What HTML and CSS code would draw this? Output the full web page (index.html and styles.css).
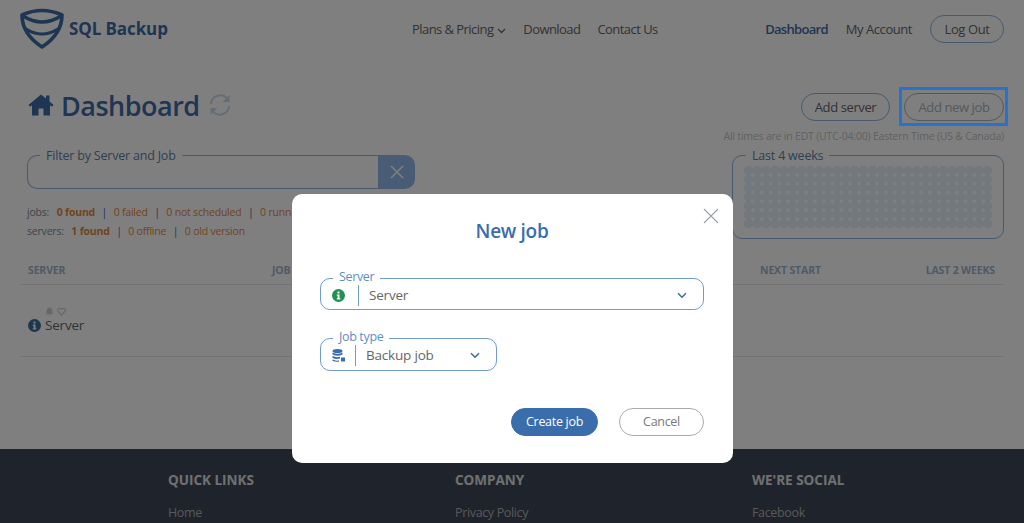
FILE: index.html
```html
<!doctype html>
<html>
<head>
<meta charset="utf-8">
<title>SQL Backup</title>
<link rel="stylesheet" href="styles.css">
</head>

<body>
<div class="page">
	<div class="top">
		<a href="#" class="logo">
			<svg width="44" height="42" viewBox="0 0 44 42"><g fill="none" stroke="#3d6ba6" stroke-linejoin="round" stroke-linecap="round"><path stroke-width="3.6" d="M2 7Q22 -2 42 7Q42 26 22 39Q2 26 2 7Z"/><path stroke-width="3.4" d="M3 8Q22 20 41 8"/><path stroke-width="3.2" d="M6 21Q22 31 38 21"/></g></svg>
			<span>SQL Backup</span>
		</a>
		<div class="nav">
			<a href="#">Plans &amp; Pricing <svg width="9" height="6" viewBox="0 0 9 6"><path d="M1 1l3.500 3.500L8 1" fill="none" stroke="#666" stroke-width="1.300"/></svg></a>
			<a href="#">Download</a>
			<a href="#">Contact Us</a>
		</div>
		<div class="user">
			<a href="#" class="cur">Dashboard</a>
			<a href="#">My Account</a>
			<a href="#" class="btn logout">Log Out</a>
		</div>
	</div>

	<div class="main">
		<div class="title">
			<h1>
				<svg width="26" height="22" viewBox="0 0 26 22"><path d="M13 0.500L0.500 11l1.500 1.800L4 11.200V21.500h6.500v-7h5v7H22V11.200l2 1.600L25.500 11 21.500 7.600V1.500h-3.500v3.100z" fill="#3d6ba6"/></svg>
				Dashboard
				<svg class="sync" width="24" height="24" viewBox="0 0 24 24"><g fill="none" stroke="#c8dbe8" stroke-width="2"><path d="M3 11A9.200 9.200 0 0 1 19.500 6"/><path d="M21 13A9.200 9.200 0 0 1 4.500 18"/></g><path d="M21.500 2v7h-7zM2.500 22v-7h7z" fill="#c8dbe8"/></svg>
			</h1>
			<div class="actions">
				<a href="#" class="btn">Add server</a>
				<a href="#" class="btn faded">Add new job</a>
			</div>
		</div>
		<p class="tz">All times are in EDT (UTC-04:00) Eastern Time (US &amp; Canada)</p>

		<div class="middle">
			<div class="left">
				<div class="filter">
					<fieldset>
						<legend>Filter by Server and Job</legend>
					</fieldset>
					<a href="#" class="clear"><svg width="14" height="14" viewBox="0 0 14 14"><path d="M1 1l12 12M13 1L1 13" stroke="#fff" stroke-width="1.500"/></svg></a>
				</div>
				<p class="stats">jobs: <b>0 found</b><i>|</i><span>0 failed</span><i>|</i><span>0 not scheduled</span><i>|</i><span>0 running</span></p>
				<p class="stats">servers: <b>1 found</b><i>|</i><span>0 offline</span><i>|</i><span>0 old version</span></p>
			</div>
			<fieldset class="weeks">
				<legend>Last 4 weeks</legend>
				<div class="dots"></div>
			</fieldset>
		</div>

		<div class="thead">
			<span class="c1">SERVER</span>
			<span class="c2">JOB</span>
			<span class="c3">NEXT START</span>
			<span class="c4">LAST 2 WEEKS</span>
		</div>
		<div class="row">
			<div class="small">
				<svg width="9" height="9" viewBox="0 0 9 9"><path d="M4.500 0.500Q7.300 0.800 7.300 4V6L8.500 7.300H0.500L1.700 6V4Q1.700 0.800 4.500 0.500ZM3.500 8h2L4.500 9z" fill="#cfcfcf"/></svg>
				<svg width="9" height="9" viewBox="0 0 9 9"><path d="M4.500 8L1 4.200Q0 2 2.200 1.300Q3.600 1 4.500 2.300Q5.400 1 6.800 1.300Q9 2 8 4.200Z" fill="none" stroke="#cfcfcf" stroke-width="1.200"/></svg>
			</div>
			<div class="name">
				<svg width="13" height="13" viewBox="0 0 13 13"><circle cx="6.500" cy="6.500" r="6.500" fill="#3a6f9a"/><path d="M5.500 2.500h2v2h-2zM4.800 5.500h2.700v3.800h.8v1.200H4.800V9.300h.8V6.700h-.8z" fill="#fff"/></svg>
				Server
			</div>
		</div>
	</div>

	<div class="foot">
		<div class="fcol c-a"><h4>QUICK LINKS</h4><a href="#">Home</a></div>
		<div class="fcol c-b"><h4>COMPANY</h4><a href="#">Privacy Policy</a></div>
		<div class="fcol c-c"><h4>WE'RE SOCIAL</h4><a href="#">Facebook</a></div>
	</div>
</div>

<div class="mask">
	<div class="ring"></div>
	<div class="dialog">
		<a href="#" class="close"><svg width="16" height="16" viewBox="0 0 16 16"><path d="M1 1l14 14M15 1L1 15" stroke="#9aa1a8" stroke-width="1.100"/></svg></a>
		<h2>New job</h2>
		<fieldset class="sel sel-server">
			<legend>Server</legend>
			<svg class="ico" width="13" height="13" viewBox="0 0 13 13"><circle cx="6.500" cy="6.500" r="6.500" fill="#1f9150"/><path d="M5.500 2.500h2v2h-2zM4.800 5.500h2.700v3.800h.8v1.200H4.800V9.300h.8V6.700h-.8z" fill="#fff"/></svg>
			<span class="val">Server</span>
			<svg class="arrow" width="10" height="7" viewBox="0 0 10 7"><path d="M1 1.200l4 4 4-4" fill="none" stroke="#3a6dab" stroke-width="1.500"/></svg>
		</fieldset>
		<fieldset class="sel sel-type">
			<legend>Job type</legend>
			<svg class="ico" width="13" height="13" viewBox="0 0 13 13"><ellipse cx="5.500" cy="2" rx="5" ry="2" fill="#3a6dab"/><path d="M0.500 3.500Q5.500 6 10.500 3.500V5.500Q5.500 8 0.500 5.500ZM0.500 7Q4 8.800 8 7.800V9.500Q4 10.500 0.500 9ZM0.500 10.500Q3 12 7 11.500V12.800Q3 13 0.500 12ZM9 8.500h4v4h-4z" fill="#3a6dab"/></svg>
			<span class="val">Backup job</span>
			<svg class="arrow" width="10" height="7" viewBox="0 0 10 7"><path d="M1 1.200l4 4 4-4" fill="none" stroke="#3a6dab" stroke-width="1.500"/></svg>
		</fieldset>
		<div class="btns">
			<a href="#" class="create">Create job</a>
			<a href="#" class="cancel">Cancel</a>
		</div>
	</div>
</div>
</body>
</html>
```

FILE: styles.css
```css
*{margin:0; padding:0; box-sizing:border-box;}
html,body{height:523px; overflow:hidden;}
body{font-family:"Open Sans","Noto Sans",sans-serif; font-size:13px; color:#666; background:#fff;}
a{color:inherit; text-decoration:none;}

.top{height:57px; padding:0 20px; display:flex; align-items:center;}
.logo{display:flex; align-items:center; gap:5px; font-size:17px; font-weight:700; color:#3d6ba6; width:392px; letter-spacing:-.1px;}
.nav{display:flex; gap:17px; align-items:center; letter-spacing:-.55px;}
.nav svg{margin-left:1px;}
.user{margin-left:auto; display:flex; gap:18px; align-items:center; letter-spacing:-.45px;}
.user .cur{font-weight:600; color:#3d6ba6; letter-spacing:-.7px;}

.btn{display:block; height:28px; line-height:26px; border:1px solid #8fb4e0; border-radius:14px; text-align:center; color:#666; letter-spacing:-.4px;}
.logout{width:74px;}

.main{padding:0 20px;}
.title{display:flex; justify-content:space-between; align-items:center; padding:30px 0 0 8px; box-sizing:content-box; height:36px;}
h1{font-size:27px; font-weight:600; color:#3d6ba6; display:flex; align-items:center; gap:7px; letter-spacing:-.5px;}
.sync{margin-left:1px;}
.actions{display:flex; align-items:center; gap:14px; margin-top:4px;}
.actions .btn{width:89px;}
.actions .faded{width:100px; color:#a8b2bc; border-color:#a8b2bc;}
.tz{text-align:right; font-size:10.500px; color:#c4c4c4; letter-spacing:-.2px; height:20px; margin-top:6px;}

.middle{display:flex; justify-content:space-between; padding-left:7px; margin-top:6px;}
.left{width:388px;}
.filter{display:flex; height:34px;}
.filter fieldset{flex:1; border:1px solid #8fb4e0; border-right:0; border-radius:10px 0 0 10px; padding:0 12px; height:42px; margin-top:-8px;}
legend{padding:0 6px; font-size:12.500px; letter-spacing:-.2px; color:#5f7fa6;}
.clear{width:37px; height:34px; background:#92b8ea; border-radius:0 10px 10px 0; display:flex; align-items:center; justify-content:center;}
.stats{font-size:10.500px; color:#7d8a98; letter-spacing:-.2px; line-height:19px;}
.filter + .stats{margin-top:14px;}
.stats b{color:#e08a3c; margin-left:5px;}
.stats span{color:#e08a3c;}
.stats i{font-style:normal; color:#3d6ba6; margin:0 6.500px;}
.weeks{width:272px; height:92px; margin-top:-8px; border:1px solid #8fb4e0; border-radius:10px; padding:0 11px;}
.weeks legend{margin-left:2px;}
.dots{height:62px; margin-top:2px; background:radial-gradient(circle,#e6f0f8 4.400px,transparent 4.800px) 0 0/8.860px 8.860px;}

.thead{display:flex; height:30px; margin-top:14px; padding:0 9px 0 8px; font-size:10.500px; font-weight:700; color:#a0b5cc; border-bottom:1px solid #e4e4e4; align-items:center; letter-spacing:-.15px;}
.c1{width:244px;}
.c2{width:488px;}
.c3{width:163px;}
.c4{flex:1; text-align:right;}
.row{height:72px; padding:22px 0 0 8px; border-bottom:1px solid #e4e4e4;}
.small{padding-left:17px; height:9px; display:flex; gap:3px;}
.name{display:flex; align-items:center; gap:4px; font-size:13.500px; color:#666; letter-spacing:-.2px;}

.foot{position:relative; margin-top:92px; height:90px; background:#3e4858; color:#e0e0e0;}
.fcol{position:absolute; top:22px;}
.fcol h4{font-size:13.500px; font-weight:700;}
.fcol a{display:block; margin-top:15px; font-size:12.500px; letter-spacing:-.35px; color:#b0b0b0;}
.c-a{left:168px;}
.c-b{left:455px;}
.c-c{left:752px;}

.mask{position:fixed; top:0; left:0; right:0; bottom:0; background:rgba(0,0,0,.5); display:flex; justify-content:center; align-items:flex-start;}
.ring{position:absolute; left:899px; top:87px; width:109px; height:39px; border:3px solid #2672cc;}
.dialog{position:relative; width:441px; height:269px; margin:194px 0 0 1px; background:#fff; border-radius:10px; padding:0 29px 0 28px;}
.dialog h2{font-size:19px; font-weight:600; color:#3a6dab; text-align:center; padding-top:24px; height:76px; letter-spacing:-.3px;}
.close{position:absolute; top:14px; right:14px;}
.sel{border:1px solid #6f9bcf; border-radius:10px; height:40px; display:flex; align-items:center; padding:0 11px 6px 11px;}
.sel legend{margin-left:1px; color:#5f8ec4; letter-spacing:-.35px; transform:translateY(-2px);}
.sel .ico{flex:none;}
.sel .val{margin-left:10px; padding-left:10px; border-left:1px solid #6f9bcf; font-size:13.500px; line-height:21px; color:#666; letter-spacing:-.2px;}
.sel-server .val{margin-left:13px;}
.sel .arrow{margin-left:auto; margin-right:5px;}
.sel-server{width:384px;}
.sel-type{width:177px; height:41px; margin-top:20px;}
.btns{display:flex; justify-content:flex-end; gap:21px; margin-top:37px;}
.btns a{display:block; height:28px; line-height:26px; border-radius:14px; text-align:center; font-size:12.500px; letter-spacing:-.3px;}
.create{width:87px; background:#3a6dab; color:#fff; border:1px solid #3a6dab;}
.cancel{width:85px; color:#777; border:1px solid #aaa;}
```
